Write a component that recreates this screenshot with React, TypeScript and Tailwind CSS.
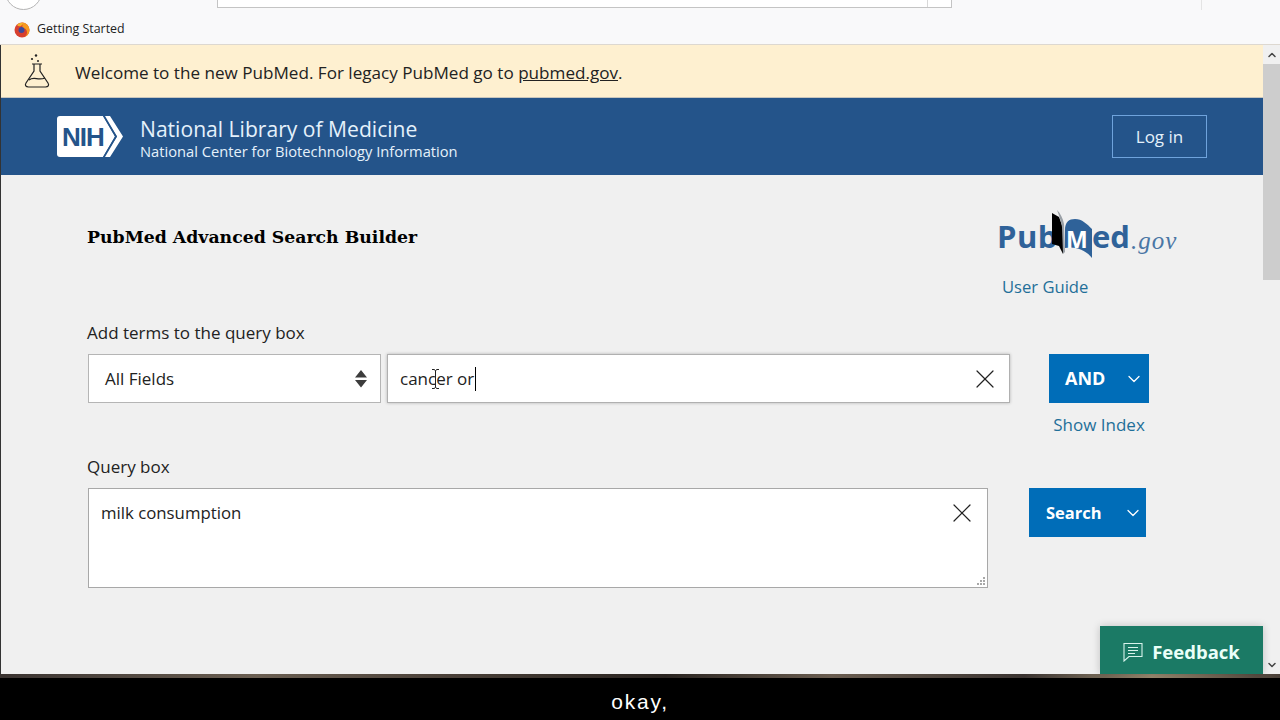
import { ChevronDown, ChevronUp, X } from "lucide-react";

const sans = "font-['Open_Sans','Noto_Sans',sans-serif]";

function FirefoxIcon() {
  return (
    <svg width="16" height="16" viewBox="0 0 16 16" className="shrink-0">
      <circle cx="8" cy="8" r="7.5" fill="#d8402f" />
      <path d="M8 .5a7.5 7.5 0 0 1 7.5 7.5c0 3-2 6-5 7 2-1.500 3-3.500 2.300-6-.8-2.500-3-3-4.300-2.500C8 5 9 3 8 .5z" fill="#f69a1f" />
      <circle cx="7.500" cy="8" r="3" fill="#3b4a9c" />
      <path d="M3 3c2-2 4-2.500 6-2 0 1-1 2-2 3-1 .5-3 .5-4-1z" fill="#f5b32a" />
    </svg>
  );
}

function FlaskIcon() {
  return (
    <svg width="26" height="36" viewBox="0 0 26 36" fill="none" stroke="#222" strokeWidth="1.200" className="shrink-0">
      <circle cx="12" cy="2.500" r="1.200" fill="#222" stroke="none" />
      <circle cx="8" cy="6" r="1.100" fill="#222" stroke="none" />
      <circle cx="14" cy="8" r="1" fill="#222" stroke="none" />
      <path d="M8 11h10M10 11v7L2 30c-1.500 2.500 0 4 2.500 4h17c2.500 0 4-1.500 2.500-4l-8-12v-7" />
      <path d="M5 27c5-4 9 1 16-2" />
    </svg>
  );
}

function NihLogo() {
  return (
    <div className="relative h-[41px] w-[66px] shrink-0">
      <svg width="66" height="41" viewBox="0 0 66 41" className="absolute inset-0">
        <path d="M3 0h43l12 20.500L46 41H3a3 3 0 0 1-3-3V3a3 3 0 0 1 3-3z" fill="#fff" />
        <path d="M47 0h6l13 20.500L53 41h-6l13-20.500z" fill="#fff" />
        <path d="M46 0h2l12 20.500L48 41h-2l12-20.500z" fill="#24548a" />
      </svg>
      <span className="absolute left-[5px] top-[7px] font-['Liberation_Sans',sans-serif] text-[26px] font-bold leading-[28px] tracking-[-1px] text-[#24548a]">
        NIH
      </span>
    </div>
  );
}

function PubMedLogo() {
  return (
    <div className="relative h-[50px] w-[180px] font-['Open_Sans',sans-serif] text-[#2f6299]">
      <span className="absolute left-0 top-[8px] text-[31px] font-bold leading-[40px] tracking-[0.5px]">
        Pub
      </span>
      <svg width="60" height="52" viewBox="0 0 60 52" className="absolute left-[54px] top-0">
        <path d="M1 5l7 4 4 11v26l-4-8-7-2z" fill="#000" />
        <path d="M6 2c3 3 6 8 7 14l1 28-2 2-1-27C10 13 8 7 6 2z" fill="#9aa0a6" />
        <path d="M14 22c0-8 4-11 10-11 7 0 12 5 17 10v29c-6-8-17-12-27-10z" fill="#2f6299" />
      </svg>
      <span className="absolute left-[69px] top-[16px] text-[23px] font-bold leading-[30px] text-white">
        M
      </span>
      <span className="absolute left-[95px] top-[8px] text-[31px] font-bold leading-[40px]">
        ed
      </span>
      <span className="absolute left-[134px] top-[17px] font-['Liberation_Serif',serif] text-[25px] italic leading-[32px] tracking-[1px] text-[#4a76a5]">
        .gov
      </span>
    </div>
  );
}

function Sorter() {
  return (
    <svg width="12" height="18" viewBox="0 0 12 18" fill="#3c3c3c">
      <path d="M6 0l6 7.500H0zM0 10h12l-6 7.500z" />
    </svg>
  );
}

export default function App() {
  return (
    <div className={`relative flex h-[720px] w-[1280px] flex-col overflow-hidden bg-black ${sans}`}>
      <div className="relative h-[45px] shrink-0 border-b border-[#ddd8d0] bg-[#f9f9fa]">
        <div className="absolute left-[5px] top-[-27px] h-[37px] w-[37px] rounded-full border border-[#b4b4b4] bg-white" />
        <div className="absolute left-[217px] top-[-4px] h-[12px] w-[735px] border border-[#c4c4c4] bg-white">
          <div className="ml-auto h-full w-[24px] border-l border-[#d8d8d8]" />
        </div>
        <div className="absolute left-[1201px] top-0 h-[10px] w-px bg-[#e4e4e4]" />
        <div className="flex h-full items-center gap-[7px] pl-[14px] pt-[15px]">
          <FirefoxIcon />
          <span className="text-[12.400px] text-[#222]">Getting Started</span>
        </div>
      </div>

      <div className="flex h-[629px] shrink-0">
        <div className="relative w-[1263px] border-l border-[#333] bg-[#f0f0f0]">
          <div className="flex h-[53px] items-center border-b border-[#c9c6bd] bg-[#fef0d0] pl-[23px] text-[#222]">
            <FlaskIcon />
            <p className="ml-[25px] pt-[3px] text-[17.100px]">
              Welcome to the new PubMed. For legacy PubMed go to <span className="underline">pubmed.gov</span>.
            </p>
          </div>

          <header className="flex h-[77px] items-center justify-between bg-[#24548a] pl-[56px] pr-[56px] text-[#e4f1fb]">
            <div className="flex items-center gap-[17px]">
              <NihLogo />
              <div className="pt-[4px]">
                <p className="text-[21.100px] leading-[26px]">National Library of Medicine</p>
                <p className="text-[14.700px] leading-[19px]">National Center for Biotechnology Information</p>
              </div>
            </div>
            <button className="h-[43px] w-[95px] border border-[#6fa3dc] text-[17px]">Log in</button>
          </header>

          <main className="pl-[86px] text-[#222]">
            <div className="flex items-start justify-between pr-[86px] pt-[33px]">
              <h1 className="mt-[17px] font-['DejaVu_Serif',serif] text-[17.300px] font-bold text-black">
                PubMed Advanced Search Builder
              </h1>
              <div className="flex flex-col">
                <PubMedLogo />
                <a className="ml-[5px] mt-[17px] text-[16.600px] text-[#1f6f99]">User Guide</a>
              </div>
            </div>

            <p className="mt-[21px] text-[17px] leading-[24px]">Add terms to the query box</p>
            <div className="mt-[9px] flex items-start">
              <div className="ml-px flex h-[49px] w-[293px] items-center justify-between border border-[#b5b5b5] bg-white pl-[16px] pr-[13px] pt-px text-[17px]">
                All Fields
                <Sorter />
              </div>
              <div className="ml-[6px] flex h-[49px] w-[623px] items-center border border-[#b0b0b0] bg-white pl-[12px] pr-[8px] pt-px text-[17px] shadow-[0_0_3px_rgba(0,0,0,0.25)]">
                <span className="border-r border-black pr-px leading-[24px]">cancer or</span>
                <X size={32} strokeWidth={0.900} className="ml-auto text-[#222]" />
              </div>
              <div className="ml-[39px] flex w-[100px] flex-col items-center">
                <button className="flex h-[49px] w-[100px] items-center bg-[#006db8] pl-[16px] pt-px text-[18px] text-white">
                  <span className="font-bold">AND</span>
                  <ChevronDown size={20} strokeWidth={1.500} className="ml-[19px]" />
                </button>
                <a className="mt-[10px] whitespace-nowrap text-[17px] leading-[24px] text-[#1f6f99]">Show Index</a>
              </div>
            </div>

            <p className="mt-[18px] text-[17px] leading-[24px]">Query box</p>
            <div className="mt-[9px] flex items-start">
              <div className="relative ml-px flex h-[100px] w-[900px] items-start border border-[#a8a8a8] bg-white pl-[12px] pr-[9px] pt-[12px] text-[16.800px]">
                <span className="leading-[24px]">milk consumption</span>
                <X size={32} strokeWidth={0.900} className="-mt-[4px] ml-auto text-[#222]" />
                <svg width="10" height="10" viewBox="0 0 10 10" fill="#a8a8a8" className="absolute bottom-[1px] right-[1px]">
                  <rect x="7" y="1" width="2" height="2" />
                  <rect x="4" y="4" width="2" height="2" />
                  <rect x="7" y="4" width="2" height="2" />
                  <rect x="1" y="7" width="2" height="2" />
                  <rect x="4" y="7" width="2" height="2" />
                  <rect x="7" y="7" width="2" height="2" />
                </svg>
              </div>
              <div className="ml-[41px]">
                <button className="flex h-[49px] w-[117px] items-center bg-[#006db8] pl-[17px] pt-px text-[16.500px] text-white">
                  <span className="font-bold">Search</span>
                  <ChevronDown size={20} strokeWidth={1.500} className="ml-[21px]" />
                </button>
              </div>
            </div>
          </main>

          <button className="absolute bottom-0 right-0 flex h-[48px] w-[163px] items-center justify-center gap-[9px] bg-[#1b7a65] pt-[4px] text-[18.500px] font-bold text-[#eafff8] shadow-[0_0_8px_rgba(0,0,0,0.2)]">
            <svg width="20" height="20" viewBox="0 0 20 20" fill="none" stroke="#d8f3ec" strokeWidth="1.100">
              <path d="M1 1.500h18v13H6L1 19z" />
              <path d="M5 5.500h10M5 8.500h10M5 11.500h7" />
            </svg>
            Feedback
          </button>
        </div>

        <aside className="flex w-[17px] flex-col bg-[#f0f0f0]">
          <div className="flex h-[19px] items-center justify-center text-[#444]">
            <ChevronUp size={12} strokeWidth={3} />
          </div>
          <div className="h-[216px] bg-[#cdcdcd]" />
          <div className="mt-auto flex h-[19px] items-center justify-center text-[#444]">
            <ChevronDown size={12} strokeWidth={3} />
          </div>
        </aside>
      </div>

      <div className="h-[4px] shrink-0 bg-[linear-gradient(90deg,#3a3330,#6b5f52_20%,#4a4038_35%,#2a2420_52%,#6a5d50_65%,#3a3330_80%,#9a8a70_90%,#4a4038)]" />
      <div className="flex flex-1 items-center justify-center bg-black pt-[6px] font-['Liberation_Sans',sans-serif] text-[21px] tracking-[1.800px] text-white">
        okay,
      </div>

      {/* mouse pointer over the query input */}
      <svg width="9" height="20" viewBox="0 0 9 20" fill="none" stroke="#222" strokeWidth="1" className="absolute left-[431px] top-[369px]">
        <path d="M1 .5h2.500L4.500 2l1-1.500H8M4.500 2v16M1 19.500h2.500l1-1.500 1 1.500H8" />
      </svg>
    </div>
  );
}
